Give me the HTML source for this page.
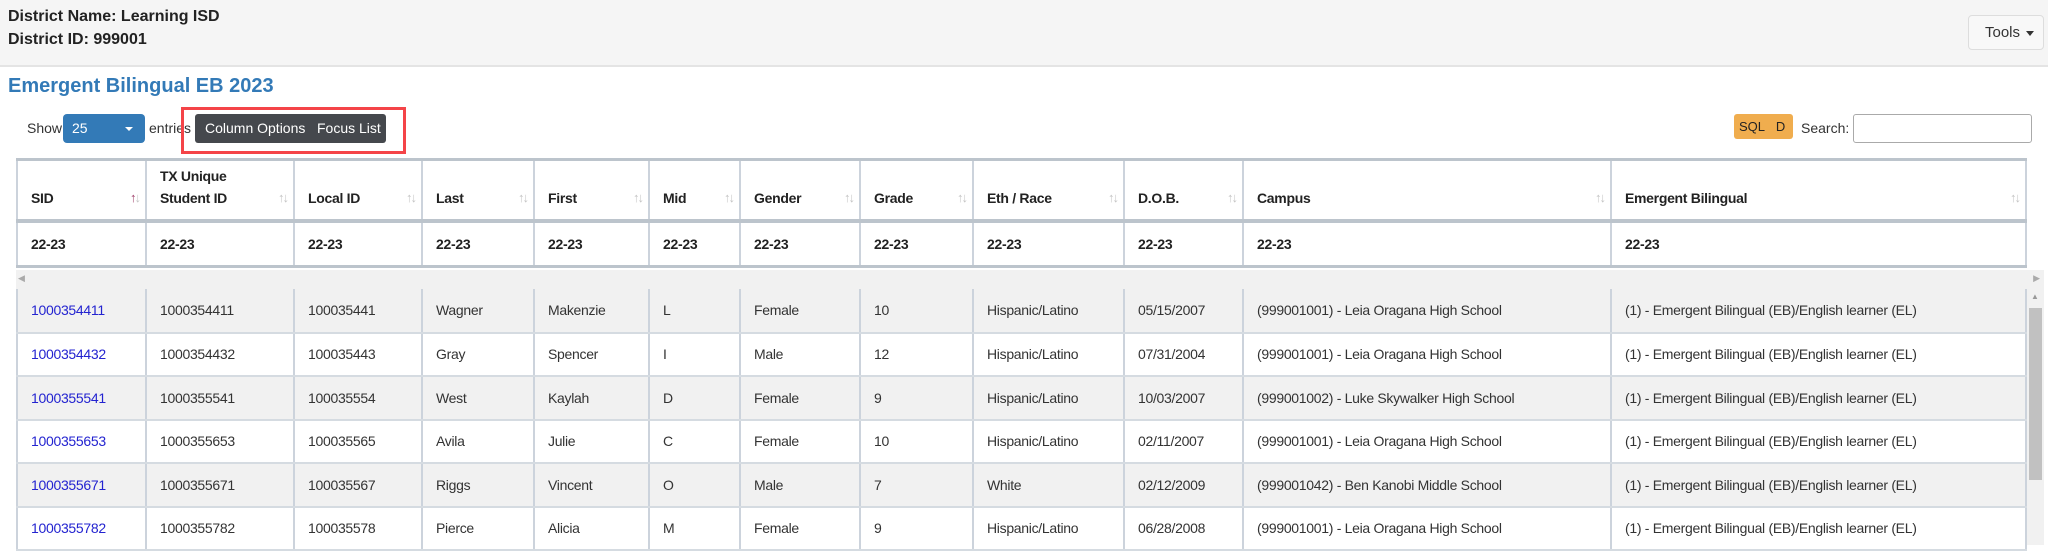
<!DOCTYPE html>
<html><head><meta charset="utf-8"><style>
*{box-sizing:border-box;margin:0;padding:0}
body{width:2048px;height:545px;overflow:hidden;background:#fff;font-family:"Liberation Sans",Arial,sans-serif;color:#333;position:relative}
.hdr{position:absolute;left:0;top:0;width:2048px;height:67px;background:#f5f5f5;border-bottom:2px solid #e4e4e4}
.hdr .l{position:absolute;left:8px;font-weight:bold;font-size:16px;color:#222}
.tools{position:absolute;left:1968px;top:15px;width:76px;height:35px;border:1px solid #ddd;border-radius:4px;background:#f8f8f8;font-size:15px;line-height:33px;padding-left:16px;color:#333}
.tools:after{content:"";position:absolute;right:9px;top:15px;border-left:4px solid transparent;border-right:4px solid transparent;border-top:5px solid #333}
h1{position:absolute;left:8px;top:75px;font-size:20px;color:#337ab7;font-weight:bold}
.abs{position:absolute}
.show{left:27px;top:120px;font-size:14px}
.sel{left:63px;top:114px;width:82px;height:29px;background:#337ab7;border-radius:4px;color:#fff;font-size:14px;line-height:29px;padding-left:9px}
.sel:after{content:"";position:absolute;right:12px;top:13px;border-left:4px solid transparent;border-right:4px solid transparent;border-top:4px solid #fff}
.red{left:181px;top:107px;width:225px;height:47px;border:3px solid #f44448}
.dark{left:195px;top:114px;width:191px;height:29px;background:#45484d;border-radius:3px;color:#fff;font-size:14px;line-height:29px}
.sql{left:1734px;top:114px;width:59px;height:25px;background:#f0ad4e;border-radius:3px;font-size:13px;line-height:25px;padding-left:5px;color:#222}
.srch{left:1801px;top:120px;font-size:14px}
.inp{left:1853px;top:114px;width:179px;height:29px;border:1px solid #aaa;border-radius:3px}
table{border-collapse:collapse;table-layout:fixed;width:2009px;font-size:14px;letter-spacing:-0.3px}
td,th{border-left:2px solid #ccd3dc;border-right:2px solid #ccd3dc;padding:0 13px;text-align:left;white-space:nowrap;overflow:hidden}
.th{position:absolute;left:16px;top:158px;border-top:3px solid #bcc4cc}
.th th{height:61px;vertical-align:bottom;padding-bottom:10px;font-weight:bold;color:#222;position:relative;line-height:22px}
.th th span{position:absolute;right:6px;bottom:10px;color:#c4c4c4;font-weight:normal;font-size:13px;letter-spacing:-2px}
.th tr.f td{height:46px;font-weight:bold;color:#222;border-top:4px solid #bcc4cc;border-bottom:3px solid #bcc4cc}
.strip{position:absolute;left:16px;top:270px;width:2028px;height:20px;background:#f1f1f1}
.body{position:absolute;left:16px;top:289px;font-size:14px}
.body td{height:43.5px;border-bottom:2px solid #d5dbe1;color:#333}
.body tr:nth-child(odd) td{background:#f1f1f1}
.body a{color:#2323d0;text-decoration:none}
.vs{position:absolute;left:2027px;top:290px;width:17px;height:255px;background:#f1f1f1}
</style></head><body>
<div class="hdr"><div class="l" style="top:8px">District Name: Learning ISD</div><div class="l" style="top:31px">District ID: 999001</div><div class="tools">Tools</div></div>
<h1>Emergent Bilingual EB 2023</h1>
<div class="abs show">Show</div>
<div class="abs sel">25</div>
<div class="abs show" style="left:149px">entries</div>
<div class="abs red"></div>
<div class="abs dark"><span style="position:absolute;left:10px">Column Options</span><span style="position:absolute;left:122px">Focus List</span></div>
<div class="abs sql">SQL&nbsp;&nbsp;&nbsp;D</div>
<div class="abs srch">Search:</div>
<div class="abs inp"></div>
<table class="th">
<colgroup><col style="width:129px"><col style="width:148px"><col style="width:128px"><col style="width:112px"><col style="width:115px"><col style="width:91px"><col style="width:120px"><col style="width:113px"><col style="width:151px"><col style="width:119px"><col style="width:368px"><col style="width:415px"></colgroup>
<tr><th>SID<span><b style="color:#a0406a;font-weight:normal">↑</b>↓</span></th><th>TX Unique<br>Student ID<span>↑↓</span></th><th>Local ID<span>↑↓</span></th><th>Last<span>↑↓</span></th><th>First<span>↑↓</span></th><th>Mid<span>↑↓</span></th><th>Gender<span>↑↓</span></th><th>Grade<span>↑↓</span></th><th>Eth / Race<span>↑↓</span></th><th>D.O.B.<span>↑↓</span></th><th>Campus<span>↑↓</span></th><th>Emergent Bilingual<span>↑↓</span></th></tr>
<tr class="f"><td>22-23</td><td>22-23</td><td>22-23</td><td>22-23</td><td>22-23</td><td>22-23</td><td>22-23</td><td>22-23</td><td>22-23</td><td>22-23</td><td>22-23</td><td>22-23</td></tr>
</table>
<div class="strip"><span style="position:absolute;left:2px;top:3px;font-size:9px;color:#aaa">◀</span><span style="position:absolute;right:4px;top:3px;font-size:9px;color:#aaa">▶</span></div>
<table class="body">
<colgroup><col style="width:129px"><col style="width:148px"><col style="width:128px"><col style="width:112px"><col style="width:115px"><col style="width:91px"><col style="width:120px"><col style="width:113px"><col style="width:151px"><col style="width:119px"><col style="width:368px"><col style="width:415px"></colgroup>
<tr><td><a>1000354411</a></td><td>1000354411</td><td>100035441</td><td>Wagner</td><td>Makenzie</td><td>L</td><td>Female</td><td>10</td><td>Hispanic/Latino</td><td>05/15/2007</td><td>(999001001) - Leia Oragana High School</td><td>(1) - Emergent Bilingual (EB)/English learner (EL)</td></tr>
<tr><td><a>1000354432</a></td><td>1000354432</td><td>100035443</td><td>Gray</td><td>Spencer</td><td>I</td><td>Male</td><td>12</td><td>Hispanic/Latino</td><td>07/31/2004</td><td>(999001001) - Leia Oragana High School</td><td>(1) - Emergent Bilingual (EB)/English learner (EL)</td></tr>
<tr><td><a>1000355541</a></td><td>1000355541</td><td>100035554</td><td>West</td><td>Kaylah</td><td>D</td><td>Female</td><td>9</td><td>Hispanic/Latino</td><td>10/03/2007</td><td>(999001002) - Luke Skywalker High School</td><td>(1) - Emergent Bilingual (EB)/English learner (EL)</td></tr>
<tr><td><a>1000355653</a></td><td>1000355653</td><td>100035565</td><td>Avila</td><td>Julie</td><td>C</td><td>Female</td><td>10</td><td>Hispanic/Latino</td><td>02/11/2007</td><td>(999001001) - Leia Oragana High School</td><td>(1) - Emergent Bilingual (EB)/English learner (EL)</td></tr>
<tr><td><a>1000355671</a></td><td>1000355671</td><td>100035567</td><td>Riggs</td><td>Vincent</td><td>O</td><td>Male</td><td>7</td><td>White</td><td>02/12/2009</td><td>(999001042) - Ben Kanobi Middle School</td><td>(1) - Emergent Bilingual (EB)/English learner (EL)</td></tr>
<tr><td><a>1000355782</a></td><td>1000355782</td><td>100035578</td><td>Pierce</td><td>Alicia</td><td>M</td><td>Female</td><td>9</td><td>Hispanic/Latino</td><td>06/28/2008</td><td>(999001001) - Leia Oragana High School</td><td>(1) - Emergent Bilingual (EB)/English learner (EL)</td></tr>
</table>
<div class="vs"><span style="position:absolute;left:4px;top:2px;font-size:8px;color:#999">▲</span><div style="position:absolute;left:2px;top:18px;width:13px;height:172px;background:#c1c1c1"></div></div>
</body></html>
